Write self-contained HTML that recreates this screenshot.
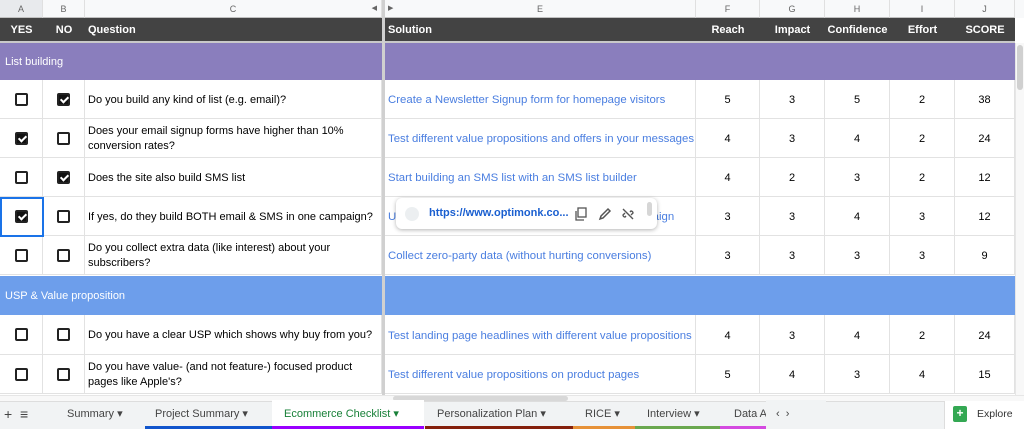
<!DOCTYPE html>
<html><head><meta charset="utf-8"><style>
*{margin:0;padding:0;box-sizing:border-box}
body{width:1024px;height:429px;overflow:hidden;background:#fff;font-family:"Liberation Sans",Arial,sans-serif;font-size:11px;color:#000;position:relative}
.a{position:absolute}
.colh{top:0;height:18px;background:#f8f9fa;border-right:1px solid #e0e0e0;border-bottom:1px solid #c0c0c0;color:#666;font-size:9px;text-align:center;line-height:18px}
.hd{top:18px;height:23px;background:#434343;color:#fff;font-weight:bold;font-size:11px;line-height:24px}
.cell{border-right:1px solid #e2e2e2;border-bottom:1px solid #e2e2e2;display:flex;align-items:center;overflow:hidden}
.c{justify-content:center}
.q{padding-left:3px;line-height:15px;padding-top:2px}
.l{color:#4a7ee0;padding-left:3px;white-space:nowrap;font-size:11.4px;padding-top:2px}
.cb{width:13px;height:13px;border:2px solid #222;border-radius:2px}
.cb.on{background:#111;position:relative}
.cb.on:after{content:"";position:absolute;left:3px;top:0px;width:3px;height:6px;border:solid #fff;border-width:0 2px 2px 0;transform:rotate(45deg)}
.tab{top:400px;height:29px;line-height:29px;font-size:11px;color:#444;padding-left:12px}
</style></head><body>
<div class="a colh" style="left:0;width:43px;background:#e8eaed">A</div>
<div class="a colh" style="left:43px;width:42px">B</div>
<div class="a colh" style="left:85px;width:297px">C<span style="position:absolute;right:4px;font-size:7px">◀</span></div>
<div class="a colh" style="left:385px;width:311px">E<span style="position:absolute;left:3px;font-size:7px">▶</span></div>
<div class="a colh" style="left:696px;width:64px">F</div>
<div class="a colh" style="left:760px;width:65px">G</div>
<div class="a colh" style="left:825px;width:65px">H</div>
<div class="a colh" style="left:890px;width:65px">I</div>
<div class="a colh" style="left:955px;width:60px">J</div>
<div class="a colh" style="left:1015px;width:9px;border:none"></div>
<div class="a hd" style="left:0;width:1015px"></div>
<div class="a hd" style="left:0;width:43px;text-align:center">YES</div>
<div class="a hd" style="left:43px;width:42px;text-align:center">NO</div>
<div class="a hd" style="left:88px">Question</div>
<div class="a hd" style="left:388px">Solution</div>
<div class="a hd" style="left:696px;width:64px;text-align:center">Reach</div>
<div class="a hd" style="left:760px;width:65px;text-align:center">Impact</div>
<div class="a hd" style="left:825px;width:65px;text-align:center">Confidence</div>
<div class="a hd" style="left:890px;width:65px;text-align:center">Effort</div>
<div class="a hd" style="left:955px;width:60px;text-align:center">SCORE</div>
<div class="a" style="left:0;top:41px;width:1015px;height:2px;background:#c9c9c9"></div>
<div class="a" style="left:382px;top:0;width:3px;height:395px;background:#d0d0d0"></div>
<div class="a" style="left:0;top:43px;width:382px;height:37px;background:#8a7ebd;color:#fff;line-height:38px;padding-left:5px">List building</div>
<div class="a" style="left:385px;top:43px;width:630px;height:37px;background:#8a7ebd"></div>
<div class="a" style="left:0;top:276px;width:382px;height:39px;background:#6d9eeb;color:#fff;line-height:40px;padding-left:5px">USP &amp; Value proposition</div>
<div class="a" style="left:385px;top:276px;width:630px;height:39px;background:#6d9eeb"></div>
<div id="rows"></div>
<script>
var R=[[80,0,1,"Do you build any kind of list (e.g. email)?","Create a Newsletter Signup form for homepage visitors",5,3,5,2,38],
[119,1,0,"Does your email signup forms have higher than 10%<br>conversion rates?","Test different value propositions and offers in your messages",4,3,4,2,24],
[158,0,1,"Does the site also build SMS list","Start building an SMS list with an SMS list builder",4,2,3,2,12],
[197,1,0,"If yes, do they build BOTH email &amp; SMS in one campaign?","Use a multi-step to collect email &amp; SMS in one campaign",3,3,4,3,12],
[236,0,0,"Do you collect extra data (like interest) about your<br>subscribers?","Collect zero-party data (without hurting conversions)",3,3,3,3,9],
[315,0,0,"Do you have a clear USP which shows why buy from you?","Test landing page headlines with different value propositions",4,3,4,2,24],
[355,0,0,"Do you have value- (and not feature-) focused product<br>pages like Apple's?","Test different value propositions on product pages",5,4,3,4,15]];
var X=[[0,43],[43,42],[85,297],[385,311],[696,64],[760,65],[825,65],[890,65],[955,60]];
var h="";
R.forEach(function(r){var t=r[0],H=(t==315?40:39);
function c(i,cls,inner){return '<div class="a cell '+cls+'" style="left:'+X[i][0]+'px;top:'+t+'px;width:'+X[i][1]+'px;height:'+H+'px">'+inner+'</div>';}
h+=c(0,"c",'<div class="cb'+(r[1]?' on':'')+'"></div>');
h+=c(1,"c",'<div class="cb'+(r[2]?' on':'')+'"></div>');
h+=c(2,"q",r[3]);
h+=c(3,"l",r[4]);
for(var i=0;i<5;i++)h+=c(4+i,"c",'<span style="padding-top:2px">'+r[5+i]+'</span>');});
document.getElementById("rows").innerHTML=h;
</script>
<div class="a" style="left:0;top:197px;width:44px;height:40px;border:2px solid #1a73e8"></div>
<div class="a" style="left:396px;top:198px;width:261px;height:31px;background:#fff;border-radius:6px;box-shadow:0 1px 4px rgba(0,0,0,.3)">
<div class="a" style="left:9px;top:9px;width:14px;height:14px;border-radius:50%;background:#eceff1"></div>
<div class="a" style="left:33px;top:9px;color:#1a5fd0;font-weight:bold;font-size:11px">https://www.optimonk.co...</div>
<svg class="a" style="left:178px;top:9px" width="14" height="14" viewBox="0 0 14 14" fill="none" stroke="#555" stroke-width="1.3"><rect x="4" y="1" width="8" height="9"/><path d="M2 4v9h8"/></svg>
<svg class="a" style="left:202px;top:9px" width="14" height="14" viewBox="0 0 14 14" fill="none" stroke="#555" stroke-width="1.5"><path d="M2 12l1-3 7-7 2 2-7 7z"/></svg>
<svg class="a" style="left:225px;top:9px" width="14" height="14" viewBox="0 0 14 14" fill="none" stroke="#555" stroke-width="1.4"><path d="M5 9l-1 1a2 2 0 0 1-2-2l2-2M9 5l1-1a2 2 0 0 1 2 2l-2 2M2 2l10 10"/></svg>
<div class="a" style="left:251px;top:4px;width:5px;height:14px;border-radius:3px;background:#d6d6d6"></div>
</div>
<div class="a" style="left:1015px;top:43px;width:9px;height:352px;background:#f8f8f8;border-left:1px solid #e6e6e6"></div>
<div class="a" style="left:1017px;top:45px;width:6px;height:45px;background:#d0d0d0;border-radius:3px"></div>
<div class="a" style="left:0;top:395px;width:1024px;height:6px;background:#f8f8f8;border-top:1px solid #e6e6e6"></div>
<div class="a" style="left:393px;top:396px;width:175px;height:5px;background:#d8d8d8;border-radius:3px"></div>
<div class="a" style="left:0;top:401px;width:1024px;height:28px;background:#f1f3f4;border-top:1px solid #ddd"></div>
<div class="a tab" style="left:0;padding-left:4px;font-size:14px">+ &nbsp;≡</div>
<div class="a tab" style="left:55px">Summary ▾</div>
<div class="a tab" style="left:143px">Project Summary ▾</div>
<div class="a" style="left:272px;top:400px;width:152px;height:29px;background:#fff"></div>
<div class="a tab" style="left:272px;color:#188038">Ecommerce Checklist ▾</div>
<div class="a tab" style="left:425px">Personalization Plan ▾</div>
<div class="a tab" style="left:573px">RICE ▾</div>
<div class="a tab" style="left:635px">Interview ▾</div>
<div class="a tab" style="left:722px">Data A</div>
<div class="a tab" style="left:766px;background:#f1f3f4;width:60px;padding-left:10px">‹ &nbsp;›</div>
<div class="a" style="left:145px;top:426px;width:127px;height:3px;background:#1155cc"></div>
<div class="a" style="left:272px;top:426px;width:152px;height:3px;background:#9900ff"></div>
<div class="a" style="left:425px;top:426px;width:148px;height:3px;background:#85200c"></div>
<div class="a" style="left:573px;top:426px;width:62px;height:3px;background:#e69138"></div>
<div class="a" style="left:635px;top:426px;width:85px;height:3px;background:#6aa84f"></div>
<div class="a" style="left:720px;top:426px;width:46px;height:3px;background:#d44ae0"></div>
<div class="a" style="left:944px;top:401px;width:80px;height:28px;background:#fff;border-left:1px solid #ddd"></div>
<div class="a" style="left:953px;top:406px;width:14px;height:16px;background:#34a853;border-radius:2px;color:#fff;font-size:12px;text-align:center;line-height:15px;font-weight:bold">+</div>
<div class="a" style="left:977px;top:408px;font-size:10.5px;color:#333">Explore</div>
</body></html>
